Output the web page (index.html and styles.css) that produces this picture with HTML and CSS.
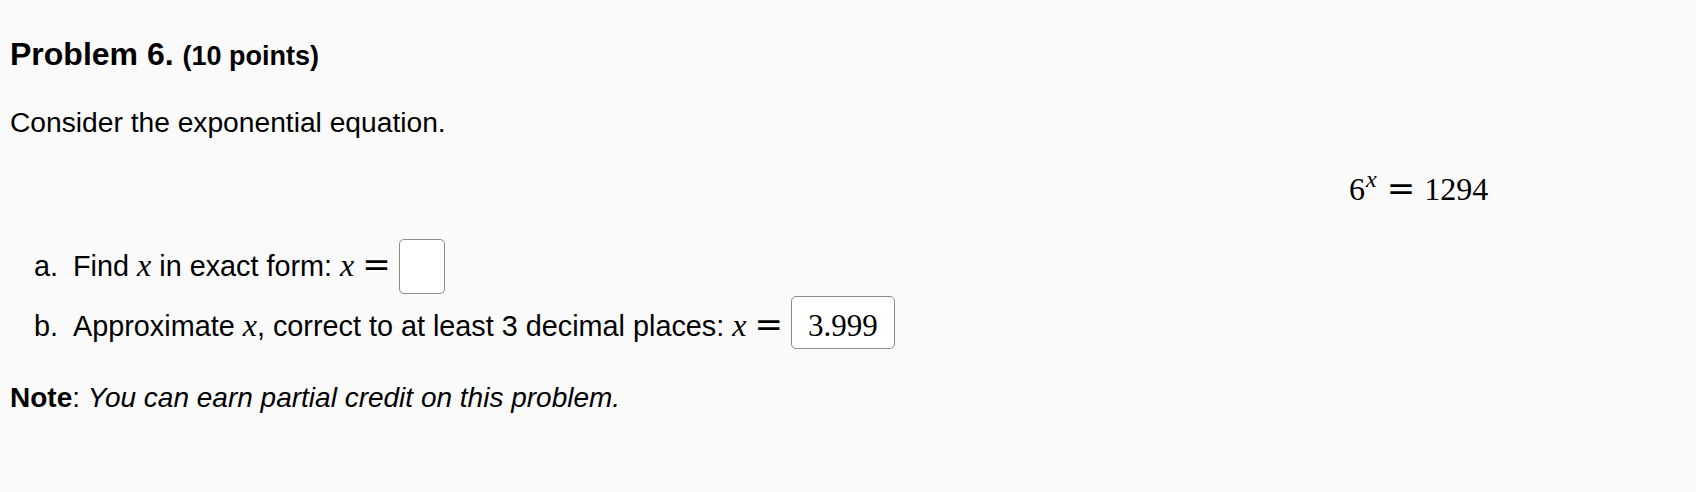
FILE: index.html
```html
<!DOCTYPE html>
<html lang="en">
<head>
<meta charset="utf-8">
<title>Problem 6</title>
<link rel="stylesheet" href="styles.css">
</head>
<body>
<div class="page">
  <h2 class="title">Problem 6. <span class="points">(10 points)</span></h2>
  <p class="intro">Consider the exponential equation.</p>
  <div class="display"><span class="num">6</span><span class="sup">x</span><span class="rel">=</span><span class="num">1294</span></div>
  <ol class="parts">
    <li class="part"><span class="marker">a.</span>Find <span class="mi">x</span> in exact form: <span class="mi">x</span><span class="rel">=</span><span class="answer answer-empty"></span></li>
    <li class="part"><span class="marker">b.</span>Approximate <span class="mi">x</span>, correct to at least 3 decimal places: <span class="mi">x</span><span class="rel">=</span><span class="answer answer-filled">3.999</span></li>
  </ol>
  <p class="note"><b>Note</b>: <i>You can earn partial credit on this problem.</i></p>
</div>
</body>
</html>
```

FILE: styles.css
```css
html, body {
  margin: 0;
  padding: 0;
  background: #fafafa;
}

body {
  font-family: "Liberation Sans", Arial, Helvetica, sans-serif;
  color: #000;
}

.page {
  padding: 34px 10px;
}

.title {
  margin: 0;
  font-size: 32px;
  line-height: 40px;
  font-weight: bold;
}

.points {
  font-size: 27px;
  line-height: 1;
}

.intro {
  margin: 28px 0 0;
  font-size: 28.2px;
  line-height: 40px;
}

.display {
  margin-top: 26px;
  padding-left: 1339px;
  font-family: "Liberation Serif", "Times New Roman", serif;
  font-size: 32px;
  line-height: 40px;
  white-space: nowrap;
}

.sup {
  font-style: italic;
  font-size: 24px;
  line-height: 0;
  vertical-align: 13px;
  margin-left: 1px;
}

.rel {
  font-family: "DejaVu Serif", serif;
  font-size: 34px;
  margin: 0 8px;
}

.display .rel {
  margin: 0 9px 0 10px;
}

.parts {
  list-style: none;
  margin: 30px 0 0;
  padding: 0 0 0 24px;
}

.part {
  font-size: 28.8px;
  line-height: 40px;
  white-space: nowrap;
}

.part + .part {
  margin-top: 2px;
}

.marker {
  display: inline-block;
  width: 39px;
}

.mi {
  font-family: "Liberation Serif", "Times New Roman", serif;
  font-style: italic;
  font-size: 32px;
}

.answer {
  display: inline-block;
  box-sizing: border-box;
  border: 1px solid #8c8c8c;
  border-radius: 5px;
  background: #fff;
}

.answer-empty {
  width: 46px;
  height: 55px;
  vertical-align: -18px;
}

.answer-filled {
  height: 53px;
  padding: 11px 16px 0;
  font-family: "Liberation Serif", "Times New Roman", serif;
  font-size: 31px;
  line-height: 36px;
}

.note {
  margin: 29px 0 0;
  font-size: 28px;
  line-height: 40px;
}
```
